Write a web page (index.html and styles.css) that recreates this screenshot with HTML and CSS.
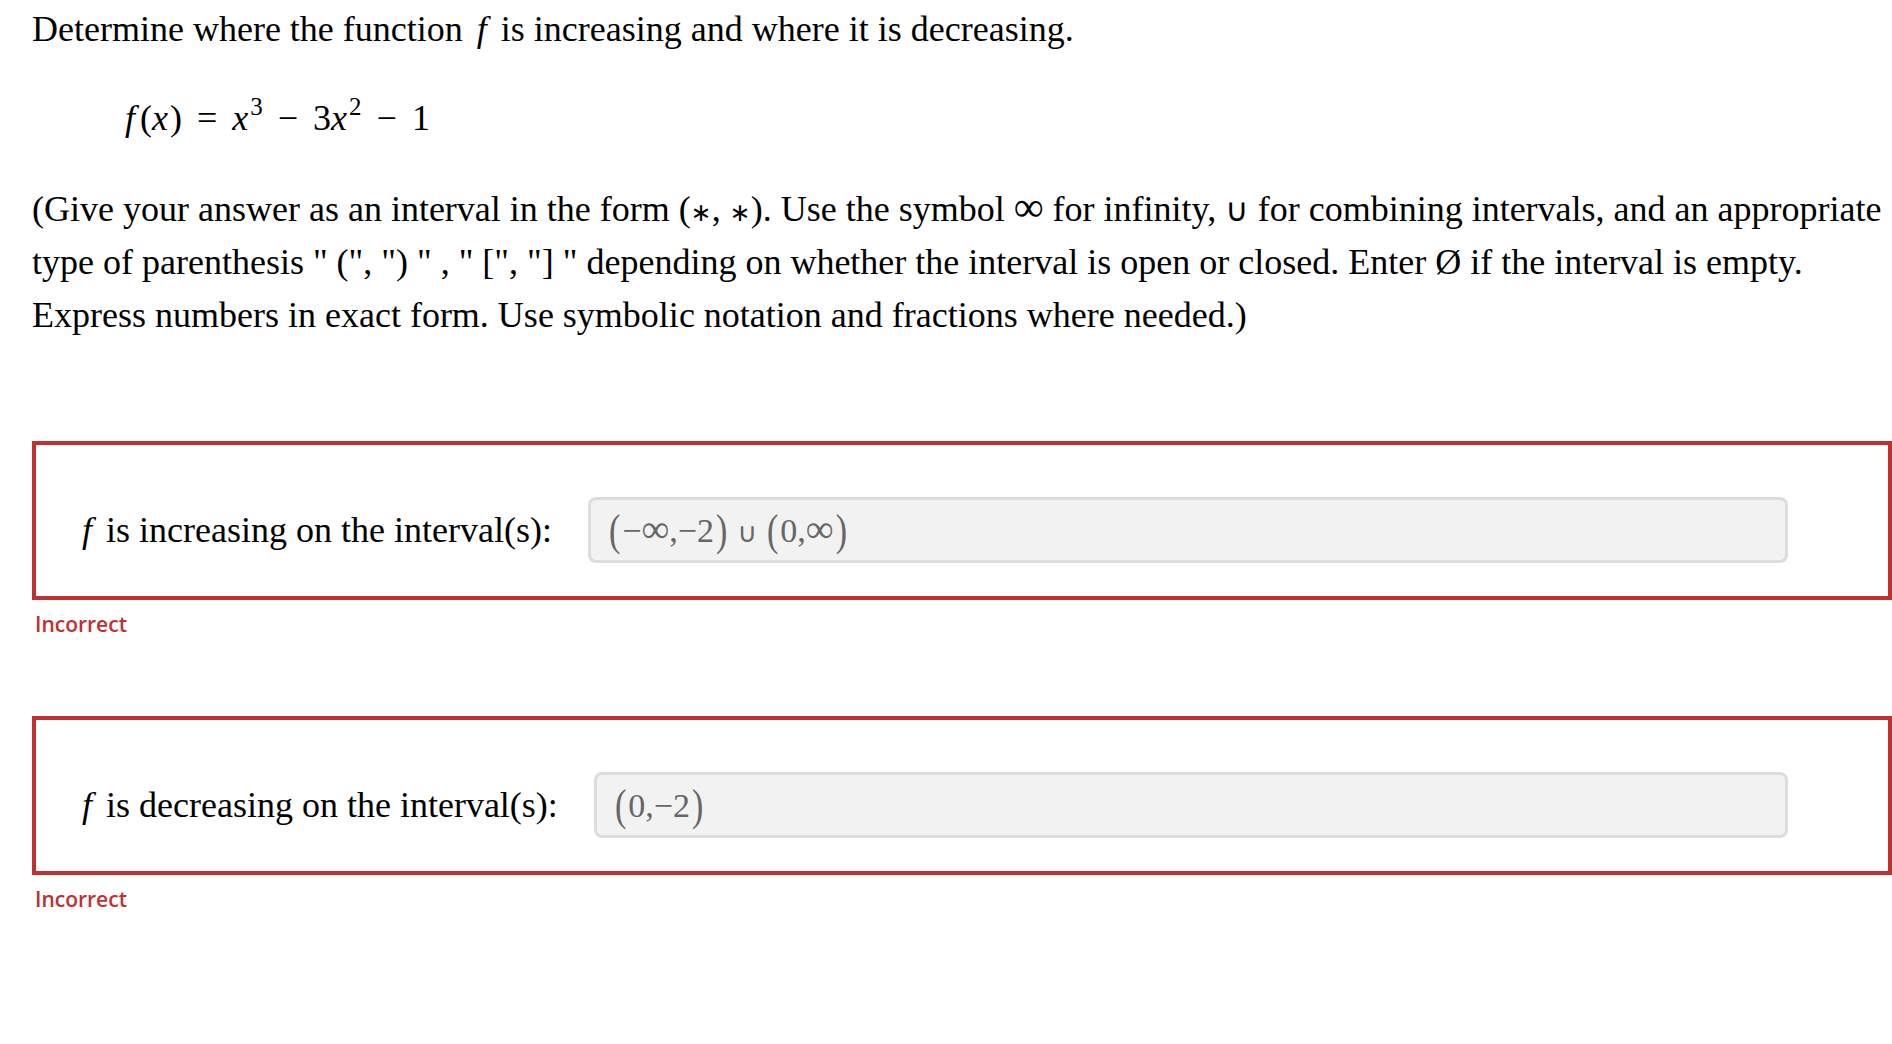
FILE: index.html
```html
<!DOCTYPE html>
<html lang="en">
  <head>
    <meta charset="UTF-8" />
    <meta name="viewport" content="width=device-width, initial-scale=1.0" />
    <title>Increasing and decreasing intervals</title>
    <link rel="stylesheet" href="styles.css">
  </head>
  <body>
    <div class="question">
      <p class="prompt">
        Determine where the function <i class="var">f</i> is increasing and where it is decreasing.
      </p>
      <p class="formula">
        <i class="fn">f</i>(<i>x</i>)<span class="op">=</span><i>x</i><sup>3</sup><span class="op">−</span>3<i>x</i><sup>2</sup><span class="op">−</span>1
      </p>
      <p class="hint">
        (Give your answer as an interval in the form (<span class="ast">∗</span>, <span class="ast">∗</span>). Use the symbol <span class="inf">∞</span> for infinity, <span class="cup">∪</span> for combining intervals, and an appropriate type of parenthesis " (", ") " , " [", "] " depending on whether the interval is open or closed. Enter Ø if the interval is empty. Express numbers in exact form. Use symbolic notation and fractions where needed.)
      </p>

      <div class="answers">
        <div class="answer">
          <div class="answer-box">
            <label class="answer-label" for="inc"><i class="var">f</i> is increasing on the interval(s):</label>
            <div class="answer-field" id="inc">
              <span class="paren">(</span>−<span class="inf">∞</span>,−2<span class="paren">)</span><span class="cup">∪</span><span class="paren">(</span>0,<span class="inf">∞</span><span class="paren">)</span>
            </div>
          </div>
          <div class="answer-status">Incorrect</div>
        </div>

        <div class="answer">
          <div class="answer-box">
            <label class="answer-label" for="dec"><i class="var">f</i> is decreasing on the interval(s):</label>
            <div class="answer-field" id="dec">
              <span class="paren">(</span>0,−2<span class="paren">)</span>
            </div>
          </div>
          <div class="answer-status">Incorrect</div>
        </div>
      </div>
    </div>
  </body>
</html>
```

FILE: styles.css
```css
* {
  box-sizing: border-box;
}

body {
  margin: 0;
  background-color: #ffffff;
  color: #000000;
  font-family: "Liberation Serif", "Times New Roman", serif;
  font-size: 36px;
  line-height: 53px;
}

.question {
  padding: 3px 0 0 32px;
}

.prompt,
.formula,
.hint {
  margin: 0;
}

.formula {
  margin-top: 36px;
  padding-left: 93px;
}

.hint {
  margin-top: 38px;
}

.var {
  padding: 0 5px;
}

.formula i {
  padding-right: 2px;
}

.formula .fn {
  padding-right: 5px;
}

.formula sup {
  font-size: 25px;
  line-height: 0;
  vertical-align: 15px;
}

.formula .op {
  padding: 0 15px;
}

.ast {
  font-family: "DejaVu Sans", sans-serif;
  font-size: 25px;
  line-height: 1;
}

.inf {
  font-size: 42px;
  line-height: 1;
}

.cup {
  font-family: "DejaVu Sans", sans-serif;
  font-size: 32px;
  line-height: 1;
}

/* Blocs de réponse */
.answers {
  margin-top: 99px;
}

.answer + .answer {
  margin-top: 76px;
}

.answer-box {
  display: flex;
  align-items: center;
  height: 159px;
  padding: 19px 100px 0 41px;
  border: 4px solid #c0302f;
}

.answer-label {
  white-space: nowrap;
}

.answer-field {
  flex: 1;
  height: 66px;
  margin-left: 36px;
  padding: 2px 16px 0;
  border: 3px solid #dddddd;
  border-radius: 8px;
  background-color: #f2f2f2;
  color: #666666;
  font-size: 34px;
  line-height: 58px;
  white-space: nowrap;
}

.answer-field .paren {
  display: inline-block;
  transform: scaleY(1.3);
  padding: 0 2px;
}

.answer-field .inf {
  font-size: 39px;
}

.answer-field .cup {
  font-size: 27px;
  padding: 0 8px;
}

.answer-status {
  margin-top: 9px;
  padding-left: 3px;
  color: #c0302f;
  font-family: "Open Sans", sans-serif;
  font-weight: 600;
  font-size: 21px;
  line-height: 31px;
}
```
